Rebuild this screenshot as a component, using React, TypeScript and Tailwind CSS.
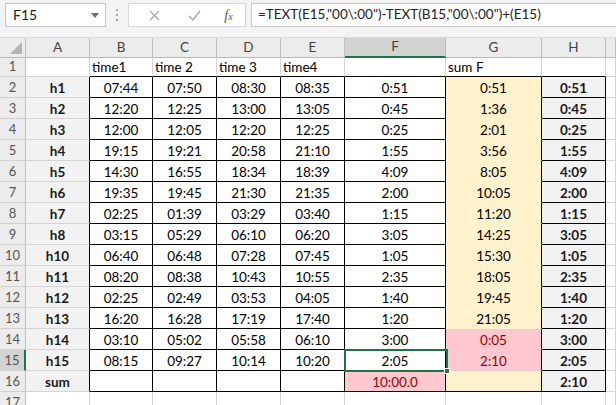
import React from "react";

const FONT = { fontFamily: "Lato, 'Open Sans', sans-serif" };

const rows: string[][] = [
  ["h1", "07:44", "07:50", "08:30", "08:35", "0:51", "0:51", "0:51"],
  ["h2", "12:20", "12:25", "13:00", "13:05", "0:45", "1:36", "0:45"],
  ["h3", "12:00", "12:05", "12:20", "12:25", "0:25", "2:01", "0:25"],
  ["h4", "19:15", "19:21", "20:58", "21:10", "1:55", "3:56", "1:55"],
  ["h5", "14:30", "16:55", "18:34", "18:39", "4:09", "8:05", "4:09"],
  ["h6", "19:35", "19:45", "21:30", "21:35", "2:00", "10:05", "2:00"],
  ["h7", "02:25", "01:39", "03:29", "03:40", "1:15", "11:20", "1:15"],
  ["h8", "03:15", "05:29", "06:10", "06:20", "3:05", "14:25", "3:05"],
  ["h10", "06:40", "06:48", "07:28", "07:45", "1:05", "15:30", "1:05"],
  ["h11", "08:20", "08:38", "10:43", "10:55", "2:35", "18:05", "2:35"],
  ["h12", "02:25", "02:49", "03:53", "04:05", "1:40", "19:45", "1:40"],
  ["h13", "16:20", "16:28", "17:19", "17:40", "1:20", "21:05", "1:20"],
  ["h14", "03:10", "05:02", "05:58", "06:10", "3:00", "0:05", "3:00"],
  ["h15", "08:15", "09:27", "10:14", "10:20", "2:05", "2:10", "2:05"],
  ["sum", "", "", "", "", "10:00.0", "", "2:10"],
];

const GRID = "#d4d4d4";
const BLACK = "#000000";

type CellProps = {
  children?: React.ReactNode;
  bg?: string;
  br?: string;
  bb?: string;
  bold?: boolean;
  align?: "left" | "center";
  color?: string;
};

function Cell({ children, bg = "#ffffff", br = GRID, bb = GRID, bold, align = "center", color = "#000000" }: CellProps) {
  return (
    <div
      className={`flex items-end pb-[2px] text-[13.5px] leading-none overflow-hidden whitespace-nowrap border-r border-b ${
        align === "center" ? "justify-center" : "justify-start pl-[2px]"
      } ${bold ? "font-bold" : "font-normal"}`}
      style={{ backgroundColor: bg, borderRightColor: br, borderBottomColor: bb, color }}
    >
      {children}
    </div>
  );
}

function RowHead({ n, selected }: { n: number; selected?: boolean }) {
  return (
    <div
      className={`flex items-end justify-center pb-[3px] text-[13px] leading-none border-b ${
        selected ? "bg-[#d2d2d2] border-r-2 border-r-[#217346]" : "bg-[#ececec] border-r border-r-[#c0c0c0]"
      } border-b-[#d0d0d0] text-[#555555]`}
    >
      {n}
    </div>
  );
}

function ColHead({ l, selected }: { l: string; selected?: boolean }) {
  return (
    <div
      className={`flex items-center justify-center text-[13.5px] leading-none border-r border-r-[#c0c0c0] ${
        selected ? "bg-[#d2d2d2] border-b-2 border-b-[#217346]" : "bg-[#ececec] border-b border-b-[#b8b8b8]"
      } text-[#444444]`}
    >
      {l}
    </div>
  );
}

export default function App() {
  const cols = ["A", "B", "C", "D", "E", "F", "G", "H", ""];
  return (
    <div className="w-[616px] h-[405px] overflow-hidden bg-white relative" style={FONT}>
      {/* formula bar */}
      <div className="h-[38px] bg-[#f3f3f3] flex items-start pt-[3px] border-b border-[#d8d8d8]">
        <div className="ml-[5px] w-[101px] h-[24px] bg-white border border-[#c6c6c6] flex items-center justify-between pl-[7px] pr-[6px]">
          <span className="text-[14px] text-[#222222] leading-none">F15</span>
          <svg width="8" height="5" viewBox="0 0 8 5">
            <path d="M0 0 L8 0 L4 5 Z" fill="#707070" />
          </svg>
        </div>
        <div className="w-[22px] h-[24px] flex flex-col items-center justify-center gap-[3px]">
          <span className="w-[2px] h-[2px] bg-[#a8a8a8]" />
          <span className="w-[2px] h-[2px] bg-[#a8a8a8]" />
          <span className="w-[2px] h-[2px] bg-[#a8a8a8]" />
        </div>
        <div className="w-[118px] h-[24px] bg-white border border-[#d6d6d6] flex items-center">
          <div className="w-[47px] flex justify-center pl-[4px]">
            <svg width="11" height="11" viewBox="0 0 11 11">
              <path d="M1 1 L10 10 M10 1 L1 10" stroke="#a6a6a6" strokeWidth="1.3" />
            </svg>
          </div>
          <div className="w-[36px] flex justify-center">
            <svg width="13" height="11" viewBox="0 0 13 11">
              <path d="M1 6 L5 10 L12 1" stroke="#a6a6a6" strokeWidth="1.3" fill="none" />
            </svg>
          </div>
          <div className="flex-1 flex justify-center">
            <span className="text-[14px] italic text-[#555555]" style={{ fontFamily: "'Liberation Serif', serif" }}>
              f<span className="text-[10px]">x</span>
            </span>
          </div>
        </div>
        <div className="ml-[5px] flex-1 h-[24px] bg-white border border-[#c6c6c6] border-r-0 flex items-center pl-[6px]">
          <span className="text-[13.5px] text-[#222222] leading-none whitespace-nowrap">
            =TEXT(E15,"00\:00")-TEXT(B15,"00\:00")+(E15)
          </span>
        </div>
      </div>

      {/* sheet */}
      <div
        className="grid relative"
        style={{
          gridTemplateColumns: "26px 64px 63px 64px 64px 64px 101px 96px 64px 10px",
          gridTemplateRows: "20px 19px repeat(15, 21px) 21px",
        }}
      >
        {/* corner */}
        <div className="bg-[#ececec] border-r border-b border-r-[#c0c0c0] border-b-[#b8b8b8] flex items-end justify-end pr-[3px] pb-[3px]">
          <svg width="12" height="12" viewBox="0 0 12 12">
            <path d="M12 0 L12 12 L0 12 Z" fill="#b4b4b4" />
          </svg>
        </div>
        {cols.map((c, i) => (
          <ColHead key={i} l={c} selected={c === "F"} />
        ))}

        {/* row 1 */}
        <RowHead n={1} />
        <Cell bb={GRID} br={GRID} />
        <Cell align="left" bb={BLACK}>time1</Cell>
        <Cell align="left" bb={BLACK}>time 2</Cell>
        <Cell align="left" bb={BLACK}>time 3</Cell>
        <Cell align="left" bb={BLACK}>time4</Cell>
        <Cell bb={BLACK} />
        <Cell align="left" bb={BLACK}>sum F</Cell>
        <Cell bb={BLACK} />
        <Cell />

        {rows.map((r, ri) => {
          const n = ri + 2;
          const pinkG = n === 14 || n === 15;
          return (
            <React.Fragment key={n}>
              <RowHead n={n} selected={n === 15} />
              <Cell bg="#f2f2f2" bold br={BLACK} bb={GRID} color="#1a1a1a">
                {r[0]}
              </Cell>
              {[1, 2, 3, 4].map((k) => (
                <Cell key={k} br={BLACK} bb={BLACK}>
                  {r[k]}
                </Cell>
              ))}
              {n === 16 ? (
                <Cell bg="#ffc7ce" br={BLACK} bb={BLACK} color="#9c0006">
                  {r[5]}
                </Cell>
              ) : (
                <Cell br={BLACK} bb={BLACK}>
                  {r[5]}
                </Cell>
              )}
              <Cell
                bg={pinkG ? "#ffc7ce" : "#fff2cc"}
                br={BLACK}
                bb={n === 16 ? BLACK : pinkG ? "#ffc7ce" : "#fff2cc"}
                color={pinkG ? "#9c0006" : "#000000"}
              >
                {r[6]}
              </Cell>
              <Cell bg="#f2f2f2" bold br={BLACK} bb={BLACK} color="#1a1a1a">
                {r[7]}
              </Cell>
              <Cell />
            </React.Fragment>
          );
        })}

        {/* row 17 */}
        <RowHead n={17} />
        {cols.map((_, i) => (
          <Cell key={i} />
        ))}

        {/* selected cell F15 */}
        <div className="absolute left-[344px] top-[311px] w-[104px] h-[23px] border-2 border-[#217346] pointer-events-none" />
        <div className="absolute left-[444px] top-[330px] w-[6px] h-[6px] bg-[#217346] border border-white pointer-events-none" />
      </div>
    </div>
  );
}
